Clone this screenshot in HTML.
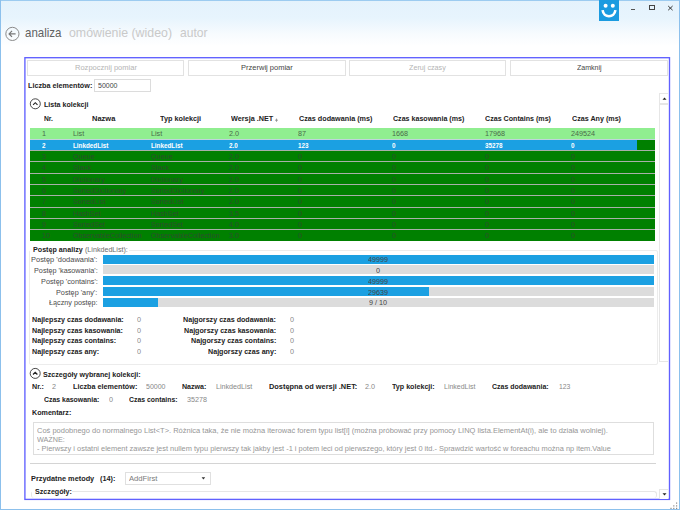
<!DOCTYPE html>
<html><head><meta charset="utf-8"><style>
html,body{margin:0;padding:0;width:680px;height:510px;overflow:hidden;background:#fff;}
body{position:relative;font-family:"Liberation Sans",sans-serif;}
.bg{position:absolute;left:0;top:0;width:680px;height:510px;background:linear-gradient(to bottom,#e4f2fc 0px,#e7f4fd 18px,#f7fbfe 34px,#ffffff 46px,#ffffff 510px);}
.tx{position:absolute;white-space:nowrap;transform-origin:0 0;}
.btn{position:absolute;height:13.5px;border:1px solid #e2e2e2;background:#fff;}
</style></head><body>
<div class="bg"></div>
<div style="position:absolute;left:0;top:0;width:680px;height:1px;background:#9ccbf0"></div>
<div style="position:absolute;left:0;top:0;width:1px;height:510px;background:#8cc0ec"></div>
<div style="position:absolute;left:679px;top:0;width:1px;height:510px;background:#8cc0ec"></div>
<div style="position:absolute;left:0;top:509px;width:680px;height:1px;background:#8cc0ec"></div>
<!-- smiley -->
<div style="position:absolute;left:599px;top:0;width:20px;height:21px;background:#1b9be0"></div>
<svg style="position:absolute;left:599px;top:0" width="20" height="21" viewBox="0 0 20 21">
 <circle cx="6.6" cy="5.7" r="2" fill="#fff"/><circle cx="13.8" cy="5.7" r="2" fill="#fff"/>
 <path d="M3.6 10.2 C4.5 18.2 15.5 18.2 16.4 10.2" stroke="#fff" stroke-width="2.6" fill="none"/>
</svg>
<!-- window buttons -->
<div style="position:absolute;left:630.5px;top:8.6px;width:4.6px;height:1.4px;background:#555"></div>
<div style="position:absolute;left:649.2px;top:5px;width:3.8px;height:3.2px;border:0.9px solid #444;border-top-width:1.6px"></div>
<svg style="position:absolute;left:667px;top:5px" width="7" height="6" viewBox="0 0 7 6"><path d="M1.2 1L5.6 5.2M5.6 1L1.2 5.2" stroke="#333" stroke-width="1"/></svg>
<!-- back button -->
<svg style="position:absolute;left:4px;top:25px" width="18" height="18" viewBox="0 0 18 18">
 <circle cx="8.4" cy="8.9" r="6.6" stroke="#8a8a8a" stroke-width="1" fill="none"/>
 <path d="M5.2 8.9H11.6M8 5.9L5.1 8.9L8 11.9" stroke="#777" stroke-width="1.2" fill="none"/>
</svg>
<!-- main panel border -->
<svg style="position:absolute;left:0;top:0" width="680" height="510"><rect x="24.9" y="57.7" width="644.6" height="441.7" fill="none" stroke="#6060ff" stroke-width="1.35"/></svg>
<!-- buttons -->
<div class="btn" style="left:27px;top:60px;width:155px"></div>
<div class="btn" style="left:188px;top:60px;width:155.5px"></div>
<div class="btn" style="left:349.4px;top:60px;width:155px"></div>
<div class="btn" style="left:510px;top:60px;width:155.5px"></div>
<!-- textbox -->
<div style="position:absolute;left:94px;top:79px;width:55px;height:10.5px;border:1px solid #dcdcdc;background:#fff"></div>
<!-- expander circles -->
<svg style="position:absolute;left:28px;top:97px" width="14" height="14" viewBox="0 0 14 14">
 <circle cx="7.3" cy="6.8" r="5" stroke="#333" stroke-width="0.9" fill="none"/>
 <path d="M5.1 7.9L7.3 5.7L9.5 7.9" stroke="#222" stroke-width="1.1" fill="none"/>
</svg>
<svg style="position:absolute;left:28px;top:367px" width="14" height="14" viewBox="0 0 14 14">
 <circle cx="7.2" cy="6.4" r="5" stroke="#333" stroke-width="0.9" fill="none"/>
 <path d="M5 7.5L7.2 5.4L9.4 7.5" stroke="#222" stroke-width="1.3" fill="none"/>
</svg>
<!-- table rows -->
<div style="position:absolute;left:29.6px;top:128.00px;width:625.8px;height:11.30px;background:#90ee90"></div>
<div style="position:absolute;left:29.6px;top:139.60px;width:625.8px;height:11.30px;background:#008000"></div>
<div style="position:absolute;left:29.6px;top:139.60px;width:607px;height:10.70px;background:#1ba0e2"></div>
<div style="position:absolute;left:29.6px;top:150.60px;width:625.8px;height:11.30px;background:#008000"></div>
<div style="position:absolute;left:29.6px;top:161.90px;width:625.8px;height:11.30px;background:#008000"></div>
<div style="position:absolute;left:29.6px;top:173.20px;width:625.8px;height:11.30px;background:#008000"></div>
<div style="position:absolute;left:29.6px;top:184.50px;width:625.8px;height:11.30px;background:#008000"></div>
<div style="position:absolute;left:29.6px;top:195.80px;width:625.8px;height:11.30px;background:#008000"></div>
<div style="position:absolute;left:29.6px;top:207.10px;width:625.8px;height:11.30px;background:#008000"></div>
<div style="position:absolute;left:29.6px;top:218.40px;width:625.8px;height:11.30px;background:#008000"></div>
<div style="position:absolute;left:29.6px;top:229.70px;width:625.8px;height:11.30px;background:#008000"></div>
<div style="position:absolute;left:29.6px;top:138.70px;width:625.8px;height:0.9px;background:#c0d4dc"></div>
<div style="position:absolute;left:29.6px;top:150.10px;width:625.8px;height:1px;background:#a8b0a8"></div>
<div style="position:absolute;left:29.6px;top:161.40px;width:625.8px;height:1px;background:#a8b0a8"></div>
<div style="position:absolute;left:29.6px;top:172.70px;width:625.8px;height:1px;background:#a8b0a8"></div>
<div style="position:absolute;left:29.6px;top:184.00px;width:625.8px;height:1px;background:#a8b0a8"></div>
<div style="position:absolute;left:29.6px;top:195.30px;width:625.8px;height:1px;background:#a8b0a8"></div>
<div style="position:absolute;left:29.6px;top:206.60px;width:625.8px;height:1px;background:#a8b0a8"></div>
<div style="position:absolute;left:29.6px;top:217.90px;width:625.8px;height:1px;background:#a8b0a8"></div>
<div style="position:absolute;left:29.6px;top:229.20px;width:625.8px;height:1px;background:#a8b0a8"></div>
<!-- scrollbar -->
<div style="position:absolute;left:659px;top:93px;width:9px;height:10.5px;border:1px solid #e6e6e6;border-right:none;box-sizing:border-box;background:#fff"></div>
<svg style="position:absolute;left:661px;top:96px" width="7" height="5" viewBox="0 0 7 5"><path d="M3.5 1.5L1.5 3.8H5.5Z" fill="#222"/></svg>
<div style="position:absolute;left:659px;top:103.5px;width:9px;height:258px;border:1px solid #e6e6e6;border-right:none;box-sizing:border-box;background:#fff"></div>
<div style="position:absolute;left:659px;top:489px;width:9px;height:10px;border:1px solid #e6e6e6;border-right:none;border-bottom:none;box-sizing:border-box;background:#fff"></div>
<svg style="position:absolute;left:661px;top:492px" width="7" height="5" viewBox="0 0 7 5"><path d="M1.5 1.3H5.5L3.5 3.6Z" fill="#222"/></svg>
<!-- groupbox postep -->
<div style="position:absolute;left:28.5px;top:250px;width:627px;height:113px;border:1px solid #ececec;border-radius:2px"></div>
<div style="position:absolute;left:30px;top:246px;width:99px;height:8px;background:#fff"></div>
<!-- progress bars -->
<div style="position:absolute;left:103.2px;top:254.8px;width:550.6px;height:9px;background:#dcdcdc"></div>
<div style="position:absolute;left:103.2px;top:254.8px;width:550.6px;height:9px;background:#1ba0e2"></div>
<div style="position:absolute;left:103.2px;top:265.3px;width:550.6px;height:9px;background:#dcdcdc"></div>
<div style="position:absolute;left:103.2px;top:276px;width:550.6px;height:9px;background:#dcdcdc"></div>
<div style="position:absolute;left:103.2px;top:276px;width:550.6px;height:9px;background:#1ba0e2"></div>
<div style="position:absolute;left:103.2px;top:286.8px;width:550.6px;height:9px;background:#dcdcdc"></div>
<div style="position:absolute;left:103.2px;top:286.8px;width:326.1px;height:9px;background:#1ba0e2"></div>
<div style="position:absolute;left:103.2px;top:297.6px;width:550.6px;height:9px;background:#dcdcdc"></div>
<div style="position:absolute;left:103.2px;top:297.6px;width:54.6px;height:9px;background:#1ba0e2"></div>
<!-- comment box -->
<div style="position:absolute;left:32.5px;top:422px;width:619px;height:30.5px;border:1px solid #dedede"></div>
<!-- hr -->
<div style="position:absolute;left:30px;top:463px;width:626px;height:1px;background:#d4d4d4"></div>
<!-- combo -->
<div style="position:absolute;left:125px;top:471.6px;width:83.5px;height:11px;border:1px solid #e0e0e0;background:#fff"></div>
<svg style="position:absolute;left:200px;top:476px" width="7" height="5" viewBox="0 0 7 5"><path d="M1.6 1.3H5.2L3.4 3.4Z" fill="#333"/></svg>
<!-- szczegoly groupbox -->
<div style="position:absolute;left:30.5px;top:490.5px;width:624px;height:6.5px;border:1px solid #e6e6e6;border-radius:3px;border-bottom:none"></div>
<div style="position:absolute;left:32px;top:486px;width:40px;height:8px;background:#fff"></div>
<!-- resize grip -->
<svg style="position:absolute;left:668px;top:501px" width="12" height="9" viewBox="0 0 12 9" fill="#8a8a8a">
<rect x="8" y="1.5" width="1.2" height="1.2"/><rect x="5.2" y="4.3" width="1.2" height="1.2"/><rect x="8" y="4.3" width="1.2" height="1.2"/>
<rect x="2.4" y="6.8" width="1.2" height="1.2"/><rect x="5.2" y="6.8" width="1.2" height="1.2"/><rect x="8" y="6.8" width="1.2" height="1.2"/>
</svg>
<svg style="position:absolute;left:273.5px;top:117px" width="5" height="6" viewBox="0 0 5 6"><path d="M2.5 1.6V4.8M1 3.2H4" stroke="#888" stroke-width="0.8"/></svg>

<div id="t0" class="tx" style="left:24.70px;top:24.48px;font-size:13.2px;line-height:17px;color:#626262;transform:scaleX(0.8733);">analiza</div>
<div id="t1" class="tx" style="left:68.90px;top:24.48px;font-size:13.2px;line-height:17px;color:#c9c9c9;transform:scaleX(0.9368);">omówienie (wideo)</div>
<div id="t2" class="tx" style="left:179.50px;top:24.48px;font-size:13.2px;line-height:17px;color:#c9c9c9;transform:scaleX(0.9148);">autor</div>
<div id="t3" class="tx" style="left:74.60px;top:63.39px;font-size:7px;line-height:9px;color:#b4b4b4;transform:scaleX(1.0748);">Rozpocznij pomiar</div>
<div id="t4" class="tx" style="left:241.20px;top:63.39px;font-size:7px;line-height:9px;color:#444;transform:scaleX(1.0739);">Przerwij pomiar</div>
<div id="t5" class="tx" style="left:409.40px;top:63.39px;font-size:7px;line-height:9px;color:#b4b4b4;transform:scaleX(1.0280);">Zeruj czasy</div>
<div id="t6" class="tx" style="left:576.70px;top:63.39px;font-size:7px;line-height:9px;color:#444;transform:scaleX(1.0034);">Zamknij</div>
<div id="t7" class="tx" style="left:27.50px;top:81.39px;font-size:7px;line-height:9px;color:#222;font-weight:bold;transform:scaleX(1.0332);">Liczba elementów:</div>
<div id="t8" class="tx" style="left:98.10px;top:81.39px;font-size:7px;line-height:9px;color:#444;transform:scaleX(1.0016);">50000</div>
<div id="t9" class="tx" style="left:43.50px;top:99.69px;font-size:7px;line-height:9px;color:#222;font-weight:bold;transform:scaleX(1.0121);">Lista kolekcji</div>
<div id="t10" class="tx" style="left:43.60px;top:114.49px;font-size:7px;line-height:9px;color:#222;font-weight:bold;transform:scaleX(0.9632);">Nr.</div>
<div id="t11" class="tx" style="left:91.50px;top:114.49px;font-size:7px;line-height:9px;color:#222;font-weight:bold;transform:scaleX(1.0690);">Nazwa</div>
<div id="t12" class="tx" style="left:160.40px;top:114.49px;font-size:7px;line-height:9px;color:#222;font-weight:bold;transform:scaleX(1.0389);">Typ kolekcji</div>
<div id="t13" class="tx" style="left:230.90px;top:114.49px;font-size:7px;line-height:9px;color:#222;font-weight:bold;transform:scaleX(1.0388);">Wersja .NET</div>
<div id="t14" class="tx" style="left:298.60px;top:114.49px;font-size:7px;line-height:9px;color:#222;font-weight:bold;transform:scaleX(1.0311);">Czas dodawania (ms)</div>
<div id="t15" class="tx" style="left:393.10px;top:114.49px;font-size:7px;line-height:9px;color:#222;font-weight:bold;transform:scaleX(1.0125);">Czas kasowania (ms)</div>
<div id="t16" class="tx" style="left:485.20px;top:114.49px;font-size:7px;line-height:9px;color:#222;font-weight:bold;transform:scaleX(1.0159);">Czas Contains (ms)</div>
<div id="t17" class="tx" style="left:571.70px;top:114.49px;font-size:7px;line-height:9px;color:#222;font-weight:bold;transform:scaleX(1.0212);">Czas Any (ms)</div>
<div id="t18" class="tx" style="left:42.40px;top:129.49px;font-size:7px;line-height:9px;color:#4a6a4a;transform:scaleX(1.0320);">1</div>
<div id="t19" class="tx" style="left:73.00px;top:129.49px;font-size:7px;line-height:9px;color:#4a6a4a;transform:scaleX(1.0320);">List</div>
<div id="t20" class="tx" style="left:150.70px;top:129.49px;font-size:7px;line-height:9px;color:#4a6a4a;transform:scaleX(1.0320);">List</div>
<div id="t21" class="tx" style="left:229.00px;top:129.49px;font-size:7px;line-height:9px;color:#4a6a4a;transform:scaleX(1.0320);">2.0</div>
<div id="t22" class="tx" style="left:298.00px;top:129.49px;font-size:7px;line-height:9px;color:#4a6a4a;transform:scaleX(1.0320);">87</div>
<div id="t23" class="tx" style="left:392.00px;top:129.49px;font-size:7px;line-height:9px;color:#4a6a4a;transform:scaleX(1.0320);">1668</div>
<div id="t24" class="tx" style="left:484.50px;top:129.49px;font-size:7px;line-height:9px;color:#4a6a4a;transform:scaleX(1.0320);">17968</div>
<div id="t25" class="tx" style="left:570.90px;top:129.49px;font-size:7px;line-height:9px;color:#4a6a4a;transform:scaleX(1.0320);">249524</div>
<div id="t26" class="tx" style="left:42.40px;top:140.79px;font-size:7px;line-height:9px;color:#ffffff;font-weight:bold;transform:scaleX(0.9000);">2</div>
<div id="t27" class="tx" style="left:73.00px;top:140.79px;font-size:7px;line-height:9px;color:#ffffff;font-weight:bold;transform:scaleX(0.9000);">LinkdedList</div>
<div id="t28" class="tx" style="left:150.70px;top:140.79px;font-size:7px;line-height:9px;color:#ffffff;font-weight:bold;transform:scaleX(0.9000);">LinkedList</div>
<div id="t29" class="tx" style="left:229.00px;top:140.79px;font-size:7px;line-height:9px;color:#ffffff;font-weight:bold;transform:scaleX(0.9000);">2.0</div>
<div id="t30" class="tx" style="left:298.00px;top:140.79px;font-size:7px;line-height:9px;color:#ffffff;font-weight:bold;transform:scaleX(0.9000);">123</div>
<div id="t31" class="tx" style="left:392.00px;top:140.79px;font-size:7px;line-height:9px;color:#ffffff;font-weight:bold;transform:scaleX(0.9000);">0</div>
<div id="t32" class="tx" style="left:484.50px;top:140.79px;font-size:7px;line-height:9px;color:#ffffff;font-weight:bold;transform:scaleX(0.9000);">35278</div>
<div id="t33" class="tx" style="left:570.90px;top:140.79px;font-size:7px;line-height:9px;color:#ffffff;font-weight:bold;transform:scaleX(0.9000);">0</div>
<div id="t34" class="tx" style="left:42.40px;top:152.09px;font-size:7px;line-height:9px;color:#2e4e2e;transform:scaleX(1.0320);">3</div>
<div id="t35" class="tx" style="left:73.00px;top:152.09px;font-size:7px;line-height:9px;color:#2e4e2e;transform:scaleX(1.0320);">Queue</div>
<div id="t36" class="tx" style="left:150.70px;top:152.09px;font-size:7px;line-height:9px;color:#2e4e2e;transform:scaleX(1.0320);">Queue</div>
<div id="t37" class="tx" style="left:229.00px;top:152.09px;font-size:7px;line-height:9px;color:#2e4e2e;transform:scaleX(1.0320);">2.0</div>
<div id="t38" class="tx" style="left:298.00px;top:152.09px;font-size:7px;line-height:9px;color:#2e4e2e;transform:scaleX(1.0320);">0</div>
<div id="t39" class="tx" style="left:392.00px;top:152.09px;font-size:7px;line-height:9px;color:#2e4e2e;transform:scaleX(1.0320);">0</div>
<div id="t40" class="tx" style="left:484.50px;top:152.09px;font-size:7px;line-height:9px;color:#2e4e2e;transform:scaleX(1.0320);">0</div>
<div id="t41" class="tx" style="left:570.90px;top:152.09px;font-size:7px;line-height:9px;color:#2e4e2e;transform:scaleX(1.0320);">0</div>
<div id="t42" class="tx" style="left:42.40px;top:163.39px;font-size:7px;line-height:9px;color:#2e4e2e;transform:scaleX(1.0320);">4</div>
<div id="t43" class="tx" style="left:73.00px;top:163.39px;font-size:7px;line-height:9px;color:#2e4e2e;transform:scaleX(1.0320);">Stack</div>
<div id="t44" class="tx" style="left:150.70px;top:163.39px;font-size:7px;line-height:9px;color:#2e4e2e;transform:scaleX(1.0320);">Stack</div>
<div id="t45" class="tx" style="left:229.00px;top:163.39px;font-size:7px;line-height:9px;color:#2e4e2e;transform:scaleX(1.0320);">2.0</div>
<div id="t46" class="tx" style="left:298.00px;top:163.39px;font-size:7px;line-height:9px;color:#2e4e2e;transform:scaleX(1.0320);">0</div>
<div id="t47" class="tx" style="left:392.00px;top:163.39px;font-size:7px;line-height:9px;color:#2e4e2e;transform:scaleX(1.0320);">0</div>
<div id="t48" class="tx" style="left:484.50px;top:163.39px;font-size:7px;line-height:9px;color:#2e4e2e;transform:scaleX(1.0320);">0</div>
<div id="t49" class="tx" style="left:570.90px;top:163.39px;font-size:7px;line-height:9px;color:#2e4e2e;transform:scaleX(1.0320);">0</div>
<div id="t50" class="tx" style="left:42.40px;top:174.69px;font-size:7px;line-height:9px;color:#2e4e2e;transform:scaleX(1.0320);">5</div>
<div id="t51" class="tx" style="left:73.00px;top:174.69px;font-size:7px;line-height:9px;color:#2e4e2e;transform:scaleX(1.0320);">Dictionary</div>
<div id="t52" class="tx" style="left:150.70px;top:174.69px;font-size:7px;line-height:9px;color:#2e4e2e;transform:scaleX(1.0320);">Dictionary</div>
<div id="t53" class="tx" style="left:229.00px;top:174.69px;font-size:7px;line-height:9px;color:#2e4e2e;transform:scaleX(1.0320);">2.0</div>
<div id="t54" class="tx" style="left:298.00px;top:174.69px;font-size:7px;line-height:9px;color:#2e4e2e;transform:scaleX(1.0320);">0</div>
<div id="t55" class="tx" style="left:392.00px;top:174.69px;font-size:7px;line-height:9px;color:#2e4e2e;transform:scaleX(1.0320);">0</div>
<div id="t56" class="tx" style="left:484.50px;top:174.69px;font-size:7px;line-height:9px;color:#2e4e2e;transform:scaleX(1.0320);">0</div>
<div id="t57" class="tx" style="left:570.90px;top:174.69px;font-size:7px;line-height:9px;color:#2e4e2e;transform:scaleX(1.0320);">0</div>
<div id="t58" class="tx" style="left:42.40px;top:185.99px;font-size:7px;line-height:9px;color:#2e4e2e;transform:scaleX(1.0320);">6</div>
<div id="t59" class="tx" style="left:73.00px;top:185.99px;font-size:7px;line-height:9px;color:#2e4e2e;transform:scaleX(1.0320);">SortedDictionary</div>
<div id="t60" class="tx" style="left:150.70px;top:185.99px;font-size:7px;line-height:9px;color:#2e4e2e;transform:scaleX(1.0320);">SortedDictionary</div>
<div id="t61" class="tx" style="left:229.00px;top:185.99px;font-size:7px;line-height:9px;color:#2e4e2e;transform:scaleX(1.0320);">2.0</div>
<div id="t62" class="tx" style="left:298.00px;top:185.99px;font-size:7px;line-height:9px;color:#2e4e2e;transform:scaleX(1.0320);">0</div>
<div id="t63" class="tx" style="left:392.00px;top:185.99px;font-size:7px;line-height:9px;color:#2e4e2e;transform:scaleX(1.0320);">0</div>
<div id="t64" class="tx" style="left:484.50px;top:185.99px;font-size:7px;line-height:9px;color:#2e4e2e;transform:scaleX(1.0320);">0</div>
<div id="t65" class="tx" style="left:570.90px;top:185.99px;font-size:7px;line-height:9px;color:#2e4e2e;transform:scaleX(1.0320);">0</div>
<div id="t66" class="tx" style="left:42.40px;top:197.29px;font-size:7px;line-height:9px;color:#2e4e2e;transform:scaleX(1.0320);">7</div>
<div id="t67" class="tx" style="left:73.00px;top:197.29px;font-size:7px;line-height:9px;color:#2e4e2e;transform:scaleX(1.0320);">SortedList</div>
<div id="t68" class="tx" style="left:150.70px;top:197.29px;font-size:7px;line-height:9px;color:#2e4e2e;transform:scaleX(1.0320);">SortedList</div>
<div id="t69" class="tx" style="left:229.00px;top:197.29px;font-size:7px;line-height:9px;color:#2e4e2e;transform:scaleX(1.0320);">2.0</div>
<div id="t70" class="tx" style="left:298.00px;top:197.29px;font-size:7px;line-height:9px;color:#2e4e2e;transform:scaleX(1.0320);">0</div>
<div id="t71" class="tx" style="left:392.00px;top:197.29px;font-size:7px;line-height:9px;color:#2e4e2e;transform:scaleX(1.0320);">0</div>
<div id="t72" class="tx" style="left:484.50px;top:197.29px;font-size:7px;line-height:9px;color:#2e4e2e;transform:scaleX(1.0320);">0</div>
<div id="t73" class="tx" style="left:570.90px;top:197.29px;font-size:7px;line-height:9px;color:#2e4e2e;transform:scaleX(1.0320);">0</div>
<div id="t74" class="tx" style="left:42.40px;top:208.59px;font-size:7px;line-height:9px;color:#2e4e2e;transform:scaleX(1.0320);">8</div>
<div id="t75" class="tx" style="left:73.00px;top:208.59px;font-size:7px;line-height:9px;color:#2e4e2e;transform:scaleX(1.0320);">HashSet</div>
<div id="t76" class="tx" style="left:150.70px;top:208.59px;font-size:7px;line-height:9px;color:#2e4e2e;transform:scaleX(1.0320);">HashSet</div>
<div id="t77" class="tx" style="left:229.00px;top:208.59px;font-size:7px;line-height:9px;color:#2e4e2e;transform:scaleX(1.0320);">3.5</div>
<div id="t78" class="tx" style="left:298.00px;top:208.59px;font-size:7px;line-height:9px;color:#2e4e2e;transform:scaleX(1.0320);">0</div>
<div id="t79" class="tx" style="left:392.00px;top:208.59px;font-size:7px;line-height:9px;color:#2e4e2e;transform:scaleX(1.0320);">0</div>
<div id="t80" class="tx" style="left:484.50px;top:208.59px;font-size:7px;line-height:9px;color:#2e4e2e;transform:scaleX(1.0320);">0</div>
<div id="t81" class="tx" style="left:570.90px;top:208.59px;font-size:7px;line-height:9px;color:#2e4e2e;transform:scaleX(1.0320);">0</div>
<div id="t82" class="tx" style="left:42.40px;top:219.89px;font-size:7px;line-height:9px;color:#2e4e2e;transform:scaleX(1.0320);">9</div>
<div id="t83" class="tx" style="left:73.00px;top:219.89px;font-size:7px;line-height:9px;color:#2e4e2e;transform:scaleX(1.0320);">SortedSet</div>
<div id="t84" class="tx" style="left:150.70px;top:219.89px;font-size:7px;line-height:9px;color:#2e4e2e;transform:scaleX(1.0320);">SortedSet</div>
<div id="t85" class="tx" style="left:229.00px;top:219.89px;font-size:7px;line-height:9px;color:#2e4e2e;transform:scaleX(1.0320);">4.0</div>
<div id="t86" class="tx" style="left:298.00px;top:219.89px;font-size:7px;line-height:9px;color:#2e4e2e;transform:scaleX(1.0320);">0</div>
<div id="t87" class="tx" style="left:392.00px;top:219.89px;font-size:7px;line-height:9px;color:#2e4e2e;transform:scaleX(1.0320);">0</div>
<div id="t88" class="tx" style="left:484.50px;top:219.89px;font-size:7px;line-height:9px;color:#2e4e2e;transform:scaleX(1.0320);">0</div>
<div id="t89" class="tx" style="left:570.90px;top:219.89px;font-size:7px;line-height:9px;color:#2e4e2e;transform:scaleX(1.0320);">0</div>
<div id="t90" class="tx" style="left:42.40px;top:231.19px;font-size:7px;line-height:9px;color:#2e4e2e;transform:scaleX(1.0320);">10</div>
<div id="t91" class="tx" style="left:73.00px;top:231.19px;font-size:7px;line-height:9px;color:#2e4e2e;transform:scaleX(1.0320);">ObservableCollection</div>
<div id="t92" class="tx" style="left:150.70px;top:231.19px;font-size:7px;line-height:9px;color:#2e4e2e;transform:scaleX(1.0320);">ObservableCollection</div>
<div id="t93" class="tx" style="left:229.00px;top:231.19px;font-size:7px;line-height:9px;color:#2e4e2e;transform:scaleX(1.0320);">3.0</div>
<div id="t94" class="tx" style="left:298.00px;top:231.19px;font-size:7px;line-height:9px;color:#2e4e2e;transform:scaleX(1.0320);">0</div>
<div id="t95" class="tx" style="left:392.00px;top:231.19px;font-size:7px;line-height:9px;color:#2e4e2e;transform:scaleX(1.0320);">0</div>
<div id="t96" class="tx" style="left:484.50px;top:231.19px;font-size:7px;line-height:9px;color:#2e4e2e;transform:scaleX(1.0320);">0</div>
<div id="t97" class="tx" style="left:570.90px;top:231.19px;font-size:7px;line-height:9px;color:#2e4e2e;transform:scaleX(1.0320);">0</div>
<div id="t98" class="tx" style="left:32.60px;top:245.09px;font-size:7px;line-height:9px;color:#222;font-weight:bold;transform:scaleX(1.0218);">Postęp analizy</div>
<div id="t99" class="tx" style="left:85.00px;top:245.09px;font-size:7px;line-height:9px;color:#6a6a6a;transform:scaleX(1.0183);">(LinkdedList):</div>
<div id="t100" class="tx" style="left:31.00px;top:255.39px;font-size:7px;line-height:9px;color:#4a4a4a;transform:scaleX(1.0672);">Postęp 'dodawania':</div>
<div id="t101" class="tx" style="left:33.70px;top:266.09px;font-size:7px;line-height:9px;color:#4a4a4a;transform:scaleX(1.0368);">Postęp 'kasowania':</div>
<div id="t102" class="tx" style="left:40.50px;top:276.99px;font-size:7px;line-height:9px;color:#4a4a4a;transform:scaleX(1.0452);">Postęp 'contains':</div>
<div id="t103" class="tx" style="left:56.10px;top:287.69px;font-size:7px;line-height:9px;color:#4a4a4a;transform:scaleX(1.0414);">Postęp 'any':</div>
<div id="t104" class="tx" style="left:48.80px;top:298.19px;font-size:7px;line-height:9px;color:#4a4a4a;transform:scaleX(1.0320);">Łączny postęp:</div>
<div id="t105" class="tx" style="left:367.55px;top:255.39px;font-size:7px;line-height:9px;color:#444;transform:scaleX(1.0320);">49999</div>
<div id="t106" class="tx" style="left:375.58px;top:266.09px;font-size:7px;line-height:9px;color:#444;transform:scaleX(1.0320);">0</div>
<div id="t107" class="tx" style="left:367.55px;top:276.99px;font-size:7px;line-height:9px;color:#444;transform:scaleX(1.0320);">49999</div>
<div id="t108" class="tx" style="left:367.55px;top:287.69px;font-size:7px;line-height:9px;color:#444;transform:scaleX(1.0320);">29639</div>
<div id="t109" class="tx" style="left:368.56px;top:298.19px;font-size:7px;line-height:9px;color:#444;transform:scaleX(1.0320);">9 / 10</div>
<div id="t110" class="tx" style="left:31.80px;top:314.89px;font-size:7px;line-height:9px;color:#222;font-weight:bold;transform:scaleX(1.0210);">Najlepszy czas dodawania:</div>
<div id="t111" class="tx" style="left:137.10px;top:314.89px;font-size:7px;line-height:9px;color:#888;transform:scaleX(1.0320);">0</div>
<div id="t112" class="tx" style="left:183.06px;top:314.89px;font-size:7px;line-height:9px;color:#222;font-weight:bold;transform:scaleX(1.0210);">Najgorszy czas dodawania:</div>
<div id="t113" class="tx" style="left:290.00px;top:314.89px;font-size:7px;line-height:9px;color:#888;transform:scaleX(1.0320);">0</div>
<div id="t114" class="tx" style="left:31.80px;top:325.59px;font-size:7px;line-height:9px;color:#222;font-weight:bold;transform:scaleX(1.0210);">Najlepszy czas kasowania:</div>
<div id="t115" class="tx" style="left:137.10px;top:325.59px;font-size:7px;line-height:9px;color:#888;transform:scaleX(1.0320);">0</div>
<div id="t116" class="tx" style="left:183.84px;top:325.59px;font-size:7px;line-height:9px;color:#222;font-weight:bold;transform:scaleX(1.0210);">Najgorszy czas kasowania:</div>
<div id="t117" class="tx" style="left:290.00px;top:325.59px;font-size:7px;line-height:9px;color:#888;transform:scaleX(1.0320);">0</div>
<div id="t118" class="tx" style="left:31.80px;top:336.29px;font-size:7px;line-height:9px;color:#222;font-weight:bold;transform:scaleX(1.0210);">Najlepszy czas contains:</div>
<div id="t119" class="tx" style="left:137.10px;top:336.29px;font-size:7px;line-height:9px;color:#888;transform:scaleX(1.0320);">0</div>
<div id="t120" class="tx" style="left:190.60px;top:336.29px;font-size:7px;line-height:9px;color:#222;font-weight:bold;transform:scaleX(1.0210);">Najgorszy czas contains:</div>
<div id="t121" class="tx" style="left:290.00px;top:336.29px;font-size:7px;line-height:9px;color:#888;transform:scaleX(1.0320);">0</div>
<div id="t122" class="tx" style="left:31.80px;top:346.89px;font-size:7px;line-height:9px;color:#222;font-weight:bold;transform:scaleX(1.0210);">Najlepszy czas any:</div>
<div id="t123" class="tx" style="left:137.10px;top:346.89px;font-size:7px;line-height:9px;color:#888;transform:scaleX(1.0320);">0</div>
<div id="t124" class="tx" style="left:207.67px;top:346.89px;font-size:7px;line-height:9px;color:#222;font-weight:bold;transform:scaleX(1.0210);">Najgorszy czas any:</div>
<div id="t125" class="tx" style="left:290.00px;top:346.89px;font-size:7px;line-height:9px;color:#888;transform:scaleX(1.0320);">0</div>
<div id="t126" class="tx" style="left:43.30px;top:369.89px;font-size:7px;line-height:9px;color:#222;font-weight:bold;transform:scaleX(1.0167);">Szczegóły wybranej kolekcji:</div>
<div id="t127" class="tx" style="left:31.50px;top:382.19px;font-size:7px;line-height:9px;color:#222;font-weight:bold;transform:scaleX(1.0210);">Nr.:</div>
<div id="t128" class="tx" style="left:52.20px;top:382.19px;font-size:7px;line-height:9px;color:#888;transform:scaleX(1.0320);">2</div>
<div id="t129" class="tx" style="left:72.70px;top:382.19px;font-size:7px;line-height:9px;color:#222;font-weight:bold;transform:scaleX(1.0332);">Liczba elementów:</div>
<div id="t130" class="tx" style="left:146.40px;top:382.19px;font-size:7px;line-height:9px;color:#888;transform:scaleX(1.0016);">50000</div>
<div id="t131" class="tx" style="left:182.40px;top:382.19px;font-size:7px;line-height:9px;color:#222;font-weight:bold;transform:scaleX(1.0114);">Nazwa:</div>
<div id="t132" class="tx" style="left:216.20px;top:382.19px;font-size:7px;line-height:9px;color:#888;transform:scaleX(1.0220);">LinkdedList</div>
<div id="t133" class="tx" style="left:268.50px;top:382.19px;font-size:7px;line-height:9px;color:#222;font-weight:bold;transform:scaleX(1.0559);">Dostępna od wersji .NET:</div>
<div id="t134" class="tx" style="left:364.70px;top:382.19px;font-size:7px;line-height:9px;color:#888;transform:scaleX(1.0320);">2.0</div>
<div id="t135" class="tx" style="left:392.00px;top:382.19px;font-size:7px;line-height:9px;color:#222;font-weight:bold;transform:scaleX(1.0193);">Typ kolekcji:</div>
<div id="t136" class="tx" style="left:443.80px;top:382.19px;font-size:7px;line-height:9px;color:#888;transform:scaleX(0.9958);">LinkedList</div>
<div id="t137" class="tx" style="left:492.00px;top:382.19px;font-size:7px;line-height:9px;color:#222;font-weight:bold;transform:scaleX(0.9965);">Czas dodawania:</div>
<div id="t138" class="tx" style="left:558.70px;top:382.19px;font-size:7px;line-height:9px;color:#888;transform:scaleX(0.9668);">123</div>
<div id="t139" class="tx" style="left:44.00px;top:395.19px;font-size:7px;line-height:9px;color:#222;font-weight:bold;transform:scaleX(0.9869);">Czas kasowania:</div>
<div id="t140" class="tx" style="left:108.80px;top:395.19px;font-size:7px;line-height:9px;color:#888;transform:scaleX(1.0320);">0</div>
<div id="t141" class="tx" style="left:129.10px;top:395.19px;font-size:7px;line-height:9px;color:#222;font-weight:bold;transform:scaleX(0.9817);">Czas contains:</div>
<div id="t142" class="tx" style="left:186.80px;top:395.19px;font-size:7px;line-height:9px;color:#888;transform:scaleX(1.0273);">35278</div>
<div id="t143" class="tx" style="left:31.50px;top:408.09px;font-size:7px;line-height:9px;color:#222;font-weight:bold;transform:scaleX(1.0210);">Komentarz:</div>
<div id="t144" class="tx" style="left:37.20px;top:425.59px;font-size:7px;line-height:9px;color:#969696;transform:scaleX(1.0701);">Coś podobnego do normalnego List&lt;T&gt;. Różnica taka, że nie można iterować forem typu list[i] (można próbować przy pomocy LINQ lista.ElementAt(i), ale to działa wolniej).</div>
<div id="t145" class="tx" style="left:37.20px;top:434.99px;font-size:7px;line-height:9px;color:#969696;transform:scaleX(1.0320);">WAŻNE:</div>
<div id="t146" class="tx" style="left:37.20px;top:443.79px;font-size:7px;line-height:9px;color:#969696;transform:scaleX(1.0621);">- Pierwszy i ostatni element zawsze jest nullem typu pierwszy tak jakby jest -1 i potem leci od pierwszego, który jest 0 itd.- Sprawdzić wartość w foreachu można np item.Value</div>
<div id="t147" class="tx" style="left:31.40px;top:474.09px;font-size:7px;line-height:9px;color:#222;font-weight:bold;transform:scaleX(1.0481);">Przydatne metody</div>
<div id="t148" class="tx" style="left:99.90px;top:474.09px;font-size:7px;line-height:9px;color:#222;font-weight:bold;transform:scaleX(1.0351);">(14):</div>
<div id="t149" class="tx" style="left:129.30px;top:474.09px;font-size:7px;line-height:9px;color:#7a7a7a;transform:scaleX(1.0935);">AddFirst</div>
<div id="t150" class="tx" style="left:34.90px;top:487.39px;font-size:7px;line-height:9px;color:#222;font-weight:bold;transform:scaleX(1.0210);">Szczegóły:</div>
</body></html>
